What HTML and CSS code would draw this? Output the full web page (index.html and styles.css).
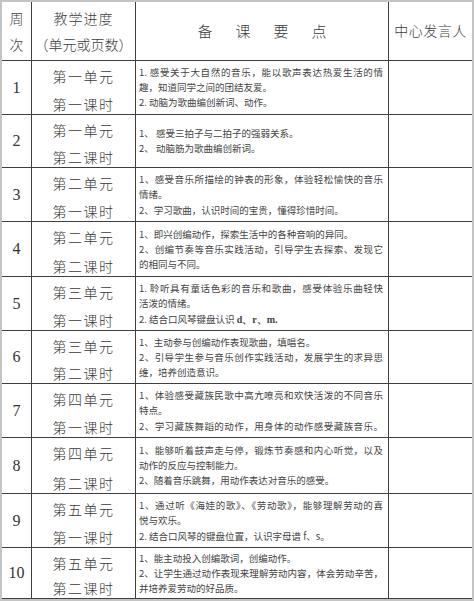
FILE: index.html
```html
<!DOCTYPE html>
<html lang="zh">
<head>
<meta charset="utf-8">
<title>教学进度</title>
<link rel="stylesheet" href="styles.css">
</head>
<body>
<div class="sheet">
  <div class="c hd two"><span>周</span><span>次</span></div>
  <div class="c hd two prog"><span>教学进度</span><span class="paren">（单元或页数）</span></div>
  <div class="c hd title"><span>备</span><span>课</span><span>要</span><span>点</span></div>
  <div class="c hd spk last">中心发言人</div>

  <div class="c wk">1</div>
  <div class="c unit"><span>第一单元</span><span>第一课时</span></div>
  <div class="c pts">
    <div class="j">1. 感受关于大自然的音乐，能以歌声表达热爱生活的情</div>
    <div>趣，知道同学之间的团结友爱。</div>
    <div>2. 动脑为歌曲编创新词、动作。</div>
  </div>
  <div class="c last"></div>

  <div class="c wk">2</div>
  <div class="c unit"><span>第一单元</span><span>第二课时</span></div>
  <div class="c pts">
    <div>1、 感受三拍子与二拍子的强弱关系。</div>
    <div>2、 动脑筋为歌曲编创新词。</div>
  </div>
  <div class="c last"></div>

  <div class="c wk">3</div>
  <div class="c unit"><span>第二单元</span><span>第一课时</span></div>
  <div class="c pts">
    <div class="j">1、感受音乐所描绘的钟表的形象，体验轻松愉快的音乐</div>
    <div>情绪。</div>
    <div class="p2">2、学习歌曲，认识时间的宝贵，懂得珍惜时间。</div>
  </div>
  <div class="c last"></div>

  <div class="c wk">4</div>
  <div class="c unit"><span>第二单元</span><span>第二课时</span></div>
  <div class="c pts">
    <div>1、即兴创编动作，探索生活中的各种音响的异同。</div>
    <div class="j">2、创编节奏等音乐实践活动，引导学生去探索、发现它</div>
    <div>的相同与不同。</div>
  </div>
  <div class="c last"></div>

  <div class="c wk">5</div>
  <div class="c unit"><span>第三单元</span><span>第一课时</span></div>
  <div class="c pts">
    <div class="j">1. 聆听具有童话色彩的音乐和歌曲，感受体验乐曲轻快</div>
    <div>活泼的情绪。</div>
    <div class="p2">2. 结合口风琴键盘认识 <b>d、r、m.</b></div>
  </div>
  <div class="c last"></div>

  <div class="c wk">6</div>
  <div class="c unit"><span>第三单元</span><span>第二课时</span></div>
  <div class="c pts">
    <div>1、主动参与创编动作表现歌曲，填唱名。</div>
    <div class="j">2、引导学生参与音乐创作实践活动，发展学生的求异思</div>
    <div>维，培养创造意识。</div>
  </div>
  <div class="c last"></div>

  <div class="c wk">7</div>
  <div class="c unit"><span>第四单元</span><span>第一课时</span></div>
  <div class="c pts">
    <div class="j">1、体验感受藏族民歌中高亢嘹亮和欢快活泼的不同音乐</div>
    <div>特点。</div>
    <div class="j p2">2、学习藏族舞蹈的动作，用身体的动作感受藏族音乐。</div>
  </div>
  <div class="c last"></div>

  <div class="c wk">8</div>
  <div class="c unit"><span>第四单元</span><span>第二课时</span></div>
  <div class="c pts">
    <div class="j">1、能够听着鼓声走与停，锻炼节奏感和内心听觉，以及</div>
    <div>动作的反应与控制能力。</div>
    <div>2、随着音乐跳舞，用动作表达对音乐的感受。</div>
  </div>
  <div class="c last"></div>

  <div class="c wk">9</div>
  <div class="c unit"><span>第五单元</span><span>第一课时</span></div>
  <div class="c pts">
    <div class="j">1、通过听《海娃的歌》、《劳动歌》，能够理解劳动的喜</div>
    <div>悦与欢乐。</div>
    <div class="p2">2. 结合口风琴的键盘位置，认识字母谱 f、s。</div>
  </div>
  <div class="c last"></div>

  <div class="c wk">10</div>
  <div class="c unit"><span>第五单元</span><span>第二课时</span></div>
  <div class="c pts">
    <div>1、能主动投入创编歌词，创编动作。</div>
    <div class="j">2、让学生通过动作表现来理解劳动内容，体会劳动辛苦，</div>
    <div>并培养爱劳动的好品质。</div>
  </div>
  <div class="c last"></div>
</div>
</body>
</html>
```

FILE: styles.css
```css
html, body {
  margin: 0;
  padding: 0;
  background: #ffffff;
}

body {
  font-family: "Noto Sans CJK SC", "Liberation Serif", sans-serif;
  color: #3a3a3a;
}

.sheet {
  box-sizing: border-box;
  width: 474px;
  height: 601px;
  border: 2px solid #c4c4c4;
  display: grid;
  grid-template-columns: 30px 104px 253px 83px;
  grid-template-rows: 59px 54px 53px 54px 55px 54px 53px 54px 56px 54px 51px;
}

.c {
  box-sizing: border-box;
  border-right: 1px solid #3e3e3e;
  border-bottom: 1px solid #3e3e3e;
  min-width: 0;
  overflow: hidden;
}

.c.last {
  border-right: none;
}

.hd {
  font-size: 14px;
  font-weight: 300;
  color: #3c3c3c;
}

.two {
  display: flex;
  flex-direction: column;
  align-items: center;
  justify-content: space-evenly;
  line-height: 20px;
}

.prog span {
  letter-spacing: 1px;
}

.prog .paren {
  letter-spacing: 0;
}

.title {
  display: flex;
  align-items: center;
  justify-content: center;
  gap: 23px;
  font-size: 15px;
  padding-bottom: 2px;
}

.spk {
  display: flex;
  align-items: center;
  justify-content: center;
  letter-spacing: 0.5px;
  padding-bottom: 2px;
}

.wk {
  display: flex;
  align-items: center;
  justify-content: center;
  font-family: "Liberation Serif", serif;
  font-size: 16px;
  color: #333;
}

.unit {
  display: flex;
  flex-direction: column;
  align-items: center;
  justify-content: space-between;
  padding: 6px 0 1px;
  font-size: 14px;
  font-weight: 300;
  line-height: 18px;
  letter-spacing: 1.5px;
  color: #3a3a3a;
}

.pts {
  display: flex;
  flex-direction: column;
  justify-content: center;
  padding: 0 5px 0 3px;
  font-size: 9.5px;
  line-height: 15px;
  color: #444;
  white-space: nowrap;
}

.pts .j {
  text-align: justify;
  text-align-last: justify;
}

.pts .p2 {
  margin-top: 1px;
}

.pts b {
  font-family: "Liberation Serif", serif;
  font-size: 10px;
  font-weight: bold;
}
```
